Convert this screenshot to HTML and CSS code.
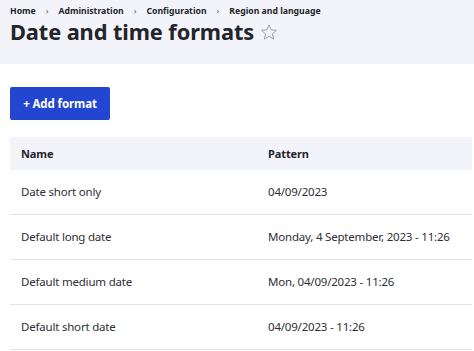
FILE: index.html
```html
<!DOCTYPE html>
<html>
<head>
<meta charset="utf-8">
<link rel="stylesheet" href="styles.css">
</head>
<body>
<header class="page-header">
  <nav class="breadcrumb">
    <span class="crumb">Home</span><span class="sep">›</span>
    <span class="crumb">Administration</span><span class="sep">›</span>
    <span class="crumb">Configuration</span><span class="sep">›</span>
    <span class="crumb">Region and language</span>
  </nav>
  <h1 class="title">Date and time formats
    <svg class="star" width="18" height="18" viewBox="0 0 24 24"><path d="M12 2.5l2.9 6.6 7.1.6-5.4 4.7 1.6 7-6.2-3.7-6.2 3.7 1.6-7L2 9.7l7.1-.6z" fill="none" stroke="#8e929c" stroke-width="1.1" stroke-linejoin="round"/></svg>
  </h1>
</header>
<main class="content">
  <div class="actions"><span class="btn">+ Add format</span></div>
  <table class="formats">
    <thead><tr><th class="c1">Name</th><th>Pattern</th></tr></thead>
    <tbody>
      <tr><td class="c1">Date short only</td><td>04/09/2023</td></tr>
      <tr><td class="c1">Default long date</td><td>Monday, 4 September, 2023 - 11:26</td></tr>
      <tr><td class="c1">Default medium date</td><td>Mon, 04/09/2023 - 11:26</td></tr>
      <tr><td class="c1">Default short date</td><td>04/09/2023 - 11:26</td></tr>
    </tbody>
  </table>
</main>
</body>
</html>
```
FILE: styles.css
```css
html, body { margin: 0; padding: 0; background: #fff; }
body { font-family: "Noto Sans", "Open Sans", sans-serif; color: #232429; }
.page-header { background: #f3f4f9; padding: 5px 10px 0; height: 59px; box-sizing: content-box; }
.breadcrumb { font-size: 8.7px; font-weight: 700; line-height: 12px; display: flex; align-items: center; color: #232429; }
.sep { margin: 0 10px; font-weight: 400; color: #55565b; }
.title { margin: -1px 0 0; font-size: 21.8px; font-weight: 700; line-height: 32px; letter-spacing: -0.1px; display: flex; align-items: center; }
.star { margin-left: 6px; }
.content { padding: 23px 0 0 10px; }
.actions { display: flex; }
.btn { background: #2246d0; color: #fff; font-size: 11.5px; font-weight: 700; letter-spacing: -0.1px; height: 33px; width: 100px; display: flex; align-items: center; justify-content: center; border-radius: 2px; }
.formats { margin-top: 17px; border-collapse: collapse; width: 462px; font-size: 11.5px; letter-spacing: -0.2px; }
.formats thead tr { background: #f3f4f9; }
.formats th { text-align: left; font-weight: 700; height: 33px; padding: 0 10px; font-size: 11px; letter-spacing: -0.1px; }
.formats td { height: 42px; padding: 0 10px 2px; border-bottom: 1px solid #e2e3ea; color: #2e2f35; white-space: nowrap; }
.formats .c1 { width: 227px; padding-left: 11px; }
```
